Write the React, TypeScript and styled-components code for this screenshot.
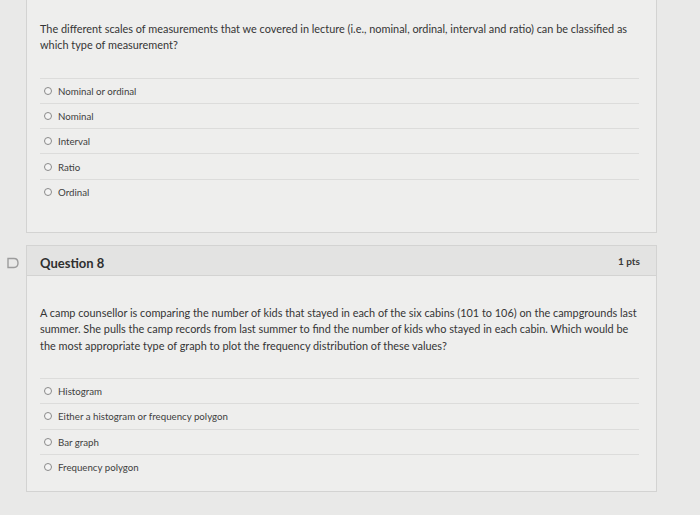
import React from 'react';
import styled, { createGlobalStyle } from 'styled-components';

interface Question {
  id: number;
  title?: string;
  points?: string;
  text: string;
  options: string[];
}

const questions: Question[] = [
  {
    id: 7,
    text:
      'The different scales of measurements that we covered in lecture (i.e., nominal, ordinal, interval and ratio) can be classified as which type of measurement?',
    options: ['Nominal or ordinal', 'Nominal', 'Interval', 'Ratio', 'Ordinal'],
  },
  {
    id: 8,
    title: 'Question 8',
    points: '1 pts',
    text:
      'A camp counsellor is comparing the number of kids that stayed in each of the six cabins (101 to 106) on the campgrounds last summer. She pulls the camp records from last summer to find the number of kids who stayed in each cabin. Which would be the most appropriate type of graph to plot the frequency distribution of these values?',
    options: ['Histogram', 'Either a histogram or frequency polygon', 'Bar graph', 'Frequency polygon'],
  },
];

const GlobalStyle = createGlobalStyle`
  html, body {
    margin: 0;
    padding: 0;
    background: #e9e9e8;
  }
  body {
    font-family: Lato, "Open Sans", sans-serif;
    color: #363636;
  }
`;

const Page = styled.div`
  width: 700px;
  height: 515px;
  overflow: hidden;
  display: flex;
  flex-direction: column;
  gap: 12px;
  margin-top: -1px;
`;

const Row = styled.div`
  display: flex;
  align-items: flex-start;
`;

const Gutter = styled.div`
  width: 26px;
  flex: none;
  display: flex;
  justify-content: center;
  padding-top: 12px;
`;

const Card = styled.div<{ $bottom: number }>`
  width: 631px;
  box-sizing: border-box;
  border: 1px solid #d3d3d2;
  background: #eeeeed;
  padding-bottom: ${(p) => p.$bottom}px;
`;

const Header = styled.div`
  height: 29px;
  display: flex;
  align-items: center;
  justify-content: space-between;
  padding: 0 16px 0 13px;
  background: #e3e3e2;
  border-bottom: 1px solid #d3d3d2;
`;

const Title = styled.span`
  font-size: 13px;
  font-weight: 700;
  color: #2f2f2f;
  margin-top: 4px;
`;

const Points = styled.span`
  font-size: 10px;
  font-weight: 700;
  color: #3a3a3a;
`;

const Body = styled.div<{ $top: number }>`
  padding: ${(p) => p.$top}px 17px 0 13px;
`;

const Text = styled.p`
  margin: 0 0 24px;
  font-size: 10.9px;
  line-height: 16.3px;
  color: #353535;
`;

const Answers = styled.ul`
  list-style: none;
  margin: 0;
  padding: 0;
`;

const Answer = styled.li`
  height: 24.3px;
  display: flex;
  align-items: center;
  gap: 6px;
  padding-left: 4px;
  border-top: 1px solid #dcdcdb;
  font-size: 9.7px;
  color: #404040;
`;

const Radio = styled.span`
  width: 6px;
  height: 6px;
  border-radius: 50%;
  border: 1px solid #8a8a8a;
  background: #f4f4f4;
  flex: none;
`;

const Flag: React.FC = () => (
  <svg width="14" height="12" viewBox="0 0 14 12">
    <path d="M2 1.5 H8 Q12 1.5 12 6 Q12 10.5 8 10.5 H2 Z" fill="none" stroke="#9c9c9c" strokeWidth="1.4" />
  </svg>
);

const App: React.FC = () => {
  return (
    <>
      <GlobalStyle />
      <Page>
        {questions.map((q) => (
          <Row key={q.id}>
            <Gutter>{q.title && <Flag />}</Gutter>
            <Card $bottom={q.title ? 12 : 28}>
              {q.title && (
                <Header>
                  <Title>{q.title}</Title>
                  <Points>{q.points}</Points>
                </Header>
              )}
              <Body $top={q.title ? 29 : 21}>
                <Text>{q.text}</Text>
                <Answers>
                  {q.options.map((o) => (
                    <Answer key={o}>
                      <Radio />
                      {o}
                    </Answer>
                  ))}
                </Answers>
              </Body>
            </Card>
          </Row>
        ))}
      </Page>
    </>
  );
};

export default App;
